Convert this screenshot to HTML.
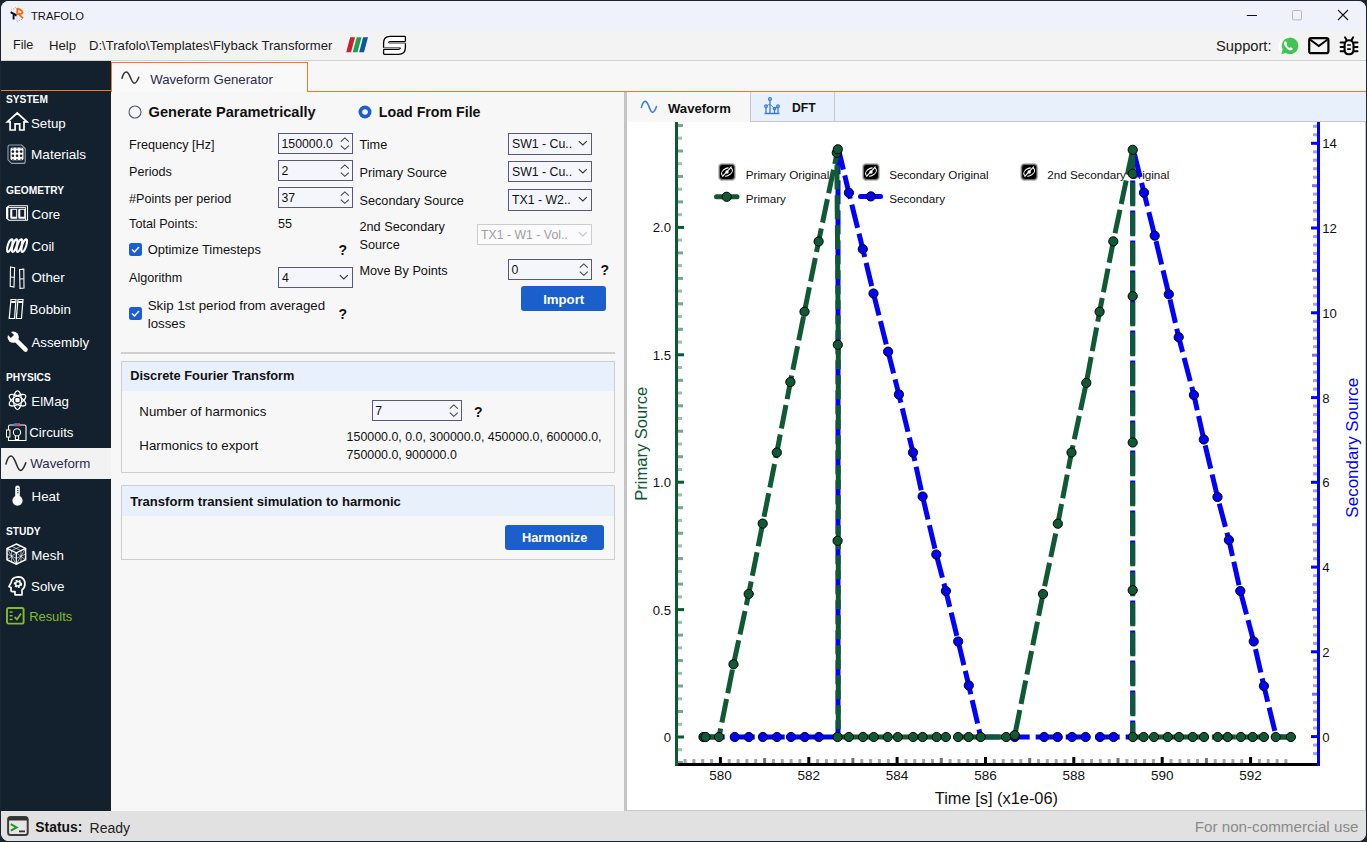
<!DOCTYPE html><html><head><meta charset='utf-8'><style>
*{box-sizing:border-box}
html,body{margin:0;padding:0;width:1367px;height:842px;overflow:hidden;background:#1b2431;font-family:"Liberation Sans",sans-serif;}
.a{position:absolute;white-space:nowrap}
.t{position:absolute;white-space:nowrap;line-height:1}
#win{position:absolute;left:1px;top:1px;width:1365px;height:840px;border-radius:8px;overflow:hidden;background:#f7f7f7}
svg{position:absolute;overflow:visible}
</style></head><body><div id="win"><div style="position:absolute;left:-1px;top:-1px;width:1367px;height:842px"><div class="a" style="left:0px;top:0px;width:1367px;height:31px;background:#eff2fa"></div>
<div class="a" style="left:0px;top:31px;width:1367px;height:30px;background:#f3f3f3"></div>
<div class="a" style="left:0px;top:60px;width:1367px;height:1px;background:#d2d2d2"></div>
<div class="a" style="left:0px;top:61px;width:1367px;height:30px;background:#f7f7f7"></div>
<div class="a" style="left:0px;top:61px;width:111px;height:750px;background:#13212f"></div>
<div class="a" style="left:0px;top:90px;width:111px;height:1px;background:#f47a20"></div>
<div class="a" style="left:307px;top:91px;width:1060px;height:1px;background:#f47a20"></div>
<div class="a" style="left:111px;top:62px;width:197px;height:30px;background:#f9f9f9;border:1px solid #f47a20;border-bottom:none"></div>
<div class="a" style="left:111px;top:92px;width:513px;height:719px;background:#f7f7f7"></div>
<div class="a" style="left:624px;top:92px;width:3px;height:719px;background:#c4c4c4"></div>
<div class="a" style="left:627px;top:92px;width:740px;height:30px;background:#e8f0fc;border-bottom:1px solid #c8c8c8"></div>
<div class="a" style="left:627px;top:92px;width:123px;height:30px;background:#f7f7f7"></div>
<div class="a" style="left:750px;top:92px;width:85px;height:30px;border-left:1px solid #c8c8c8;border-right:1px solid #c8c8c8;border-bottom:1px solid #c8c8c8"></div>
<div class="a" style="left:627px;top:122px;width:739px;height:689px;background:#ffffff;border-bottom:1px solid #c8c8c8;border-right:1px solid #c8c8c8"></div>
<div class="a" style="left:0px;top:811px;width:1367px;height:31px;background:#e1e1e1"></div>
<svg style="left:5px;top:3px;" width="25" height="25" viewBox="0 0 25 25"><path d="M5.9 7.1 L11.3 4.2" stroke="#f7a770" stroke-width="1" stroke-dasharray="1.3 0.9" fill="none"/><path d="M11.9 18.4 L17.8 16" stroke="#9aa3ad" stroke-width="1" stroke-dasharray="1.3 0.9" fill="none"/><path d="M11.9 12.2 V18" stroke="#d5dbe2" stroke-width="1" fill="none"/><path d="M5.6 9.2 L11.6 12.5" stroke="#0b1220" stroke-width="2" fill="none"/><path d="M8.6 11.6 V16.6" stroke="#0b1220" stroke-width="1.9" fill="none"/><path d="M12.3 5 V11.9 M12.3 5.4 L16.2 7.4 Q17.6 8.3 17.4 9.6 Q17.2 10.8 15.8 10.9 L13.6 10.6 L17.9 15.4" stroke="#ff6a10" stroke-width="1.9" fill="none" stroke-linejoin="miter"/></svg>
<div class="t" style="left:31px;top:10.52px;font-size:11.2px;font-weight:normal;color:#111;">TRAFOLO</div>
<svg style="left:1246px;top:14px;" width="12" height="3" viewBox="0 0 12 3"><path d="M0.8 1.5 H11" stroke="#111" stroke-width="1.1"/></svg><svg style="left:1291px;top:9px;" width="12" height="12" viewBox="0 0 12 12"><rect x="1.5" y="1.5" width="9" height="9.4" rx="1" stroke="#b8b8b8" stroke-width="1" fill="none"/></svg><svg style="left:1337px;top:9px;" width="12" height="12" viewBox="0 0 12 12"><path d="M1 1 L11 11 M11 1 L1 11" stroke="#111" stroke-width="1.1"/></svg>
<div class="t" style="left:13px;top:39.33px;font-size:12.6px;font-weight:normal;color:#1a1a1a;">File</div>
<div class="t" style="left:49px;top:38.83px;font-size:13.2px;font-weight:normal;color:#1a1a1a;">Help</div>
<div class="t" style="left:89px;top:38.91px;font-size:13.1px;font-weight:normal;color:#1a1a1a;">D:\Trafolo\Templates\Flyback Transformer</div>
<svg style="left:346px;top:37px;" width="23" height="16" viewBox="0 0 23 16"><path d="M4.2 0.3 H9 L5 15.2 H0.2 Z" fill="#c9212b"/><path d="M10.7 0.3 H15.5 L11.5 15.2 H6.7 Z" fill="#23a047"/><path d="M17.1 0.3 H22 L18 15.2 H13.2 Z" fill="#0b56a1"/></svg><svg style="left:380px;top:33px;" width="30" height="25" viewBox="0 0 30 25"><path d="M3.6 14.9 V10 Q3.6 3.3 10 3.3 H25.4 V8.6 H10 L8.4 9.9 H25.4 V14.5 Q25.4 21.4 18.4 21.4 H3.6 V16.3 H18.4 L20.5 14.9 Z" fill="#fff"/><path d="M3.6 14.9 V10 Q3.6 3.3 10 3.3 H24.6 Q25.4 3.3 25.4 4.1 V7.8 Q25.4 8.6 24.6 8.6 H10 Q8.9 8.6 8.4 9.8" stroke="#000" stroke-width="1.3" fill="none"/><path d="M25.4 10.1 V14.5 Q25.4 21.4 18.4 21.4 H4.4 Q3.6 21.4 3.6 20.6 V17.1 Q3.6 16.3 4.4 16.3 H18.4 Q19.9 16.3 20.5 14.9" stroke="#000" stroke-width="1.3" fill="none"/><path d="M8.8 10.1 H25.4 M3.6 14.7 H20.5" stroke="#777" stroke-width="1.3" fill="none"/></svg>
<div class="t" style="left:1216px;top:38.56px;font-size:14.7px;font-weight:normal;color:#1a1a1a;">Support:</div>
<svg style="left:1278px;top:35.5px;" width="20" height="20" viewBox="0 0 20 20"><circle cx="10" cy="10" r="9.6" fill="#fff" opacity="0.9"/><path d="M3.3 18.2 L4.6 13.6 A8.3 8.3 0 1 1 7.6 16.9 Z" fill="#41c452"/><path d="M6.6 5.6 Q7.4 4.8 8.1 5.6 L9 7.4 Q9.1 8.1 8.4 8.6 Q9.3 10.9 11.5 12 Q12.1 11.2 12.8 11.3 L14.5 12.3 Q15.1 13 14.2 13.8 Q12.8 15 10 13.4 Q7.2 11.7 6.1 8.8 Q5.6 6.7 6.6 5.6 Z" fill="#fff"/></svg><svg style="left:1308px;top:37px;" width="22" height="18" viewBox="0 0 22 18"><rect x="1.2" y="1.2" width="19.2" height="15" rx="2" stroke="#000" stroke-width="2.2" fill="none"/><path d="M2 2.5 L10.8 9 L19.6 2.5" stroke="#000" stroke-width="2" fill="none"/></svg><svg style="left:1336px;top:33px;" width="26" height="26" viewBox="0 0 26 26"><path d="M8.6 12.2 Q8.6 7.2 13 7.2 Q17.5 7.2 17.5 12.2 V16.4 Q17.5 21.2 13 21.2 Q8.6 21.2 8.6 16.4 Z" stroke="#000" stroke-width="2.1" fill="none"/><path d="M9 4.3 L10.6 6.9 M17.2 4.3 L15.6 6.9" stroke="#000" stroke-width="2" stroke-linecap="round" fill="none"/><path d="M4.6 9.6 H7.8 M4.6 13.9 H7.8 M4.6 18.2 H7.8 M18.3 9.6 H21.5 M18.3 13.9 H21.5 M18.3 18.2 H21.5" stroke="#000" stroke-width="2" stroke-linecap="round" fill="none"/><path d="M11.2 12 H14.8 M11.2 16.1 H14.8" stroke="#000" stroke-width="1.7"/></svg>
<div class="t" style="left:6px;top:95.17px;font-size:10.2px;font-weight:bold;color:#ffffff;">SYSTEM</div>
<div class="t" style="left:31px;top:116.74px;font-size:13.3px;font-weight:normal;color:#ffffff;">Setup</div>
<div class="t" style="left:31px;top:148.49px;font-size:13.6px;font-weight:normal;color:#ffffff;">Materials</div>
<div class="t" style="left:6px;top:185.67px;font-size:10.2px;font-weight:bold;color:#ffffff;">GEOMETRY</div>
<div class="t" style="left:31.4px;top:207.74px;font-size:13.3px;font-weight:normal;color:#ffffff;">Core</div>
<div class="t" style="left:31.4px;top:239.74px;font-size:13.3px;font-weight:normal;color:#ffffff;">Coil</div>
<div class="t" style="left:31.4px;top:271.24px;font-size:13.3px;font-weight:normal;color:#ffffff;">Other</div>
<div class="t" style="left:29.4px;top:303.34px;font-size:13.3px;font-weight:normal;color:#ffffff;">Bobbin</div>
<div class="t" style="left:31.4px;top:335.74px;font-size:13.3px;font-weight:normal;color:#ffffff;">Assembly</div>
<div class="t" style="left:6px;top:373.17px;font-size:10.2px;font-weight:bold;color:#ffffff;">PHYSICS</div>
<div class="t" style="left:31.3px;top:394.74px;font-size:13.3px;font-weight:normal;color:#ffffff;">ElMag</div>
<div class="t" style="left:29.2px;top:426.34px;font-size:13.3px;font-weight:normal;color:#ffffff;">Circuits</div>
<div class="a" style="left:1px;top:448px;width:110px;height:31px;background:#f2f2f2"></div>
<div class="t" style="left:30.2px;top:457.44px;font-size:13.3px;font-weight:normal;color:#2b2b50;">Waveform</div>
<div class="t" style="left:31.6px;top:489.54px;font-size:13.3px;font-weight:normal;color:#ffffff;">Heat</div>
<div class="t" style="left:6px;top:526.87px;font-size:10.2px;font-weight:bold;color:#ffffff;">STUDY</div>
<div class="t" style="left:31.3px;top:548.64px;font-size:13.3px;font-weight:normal;color:#ffffff;">Mesh</div>
<div class="t" style="left:31.1px;top:580.44px;font-size:13.3px;font-weight:normal;color:#ffffff;">Solve</div>
<div class="t" style="left:29.2px;top:610.58px;font-size:12.9px;font-weight:normal;color:#86bb2a;">Results</div>
<svg style="left:7px;top:112px;" width="21" height="19" viewBox="0 0 21 19"><path d="M3.1 18 V9.8 H0.4 L10.2 1 L20 9.8 H17 V18 H12.7 V11.8 H8.1 V18 Z" stroke="#fff" stroke-width="1.7" fill="none" stroke-linejoin="miter"/></svg><svg style="left:7px;top:143.5px;" width="20" height="21" viewBox="0 0 20 21"><path d="M3 1 H14.6 L18.2 4.6 V17.4 Q18.2 19.4 16.2 19.4 H4.6 L1 15.8 V3 Q1 1 3 1 Z" stroke="#9aa2aa" stroke-width="1.1" fill="none"/><rect x="3.5" y="3.4" width="13" height="12.8" rx="1.6" fill="#fff"/><circle cx="5.9" cy="7.6" r="1.3" fill="#13212f"/><circle cx="5.9" cy="11.8" r="1.3" fill="#13212f"/><circle cx="10.0" cy="7.6" r="1.3" fill="#13212f"/><circle cx="10.0" cy="11.8" r="1.3" fill="#13212f"/><circle cx="14.1" cy="7.6" r="1.3" fill="#13212f"/><circle cx="14.1" cy="11.8" r="1.3" fill="#13212f"/><path d="M5.1 4 H6.7 M5.1 15.4 H6.7" stroke="#13212f" stroke-width="0.9"/><path d="M9.2 4 H10.8 M9.2 15.4 H10.8" stroke="#13212f" stroke-width="0.9"/><path d="M13.3 4 H14.9 M13.3 15.4 H14.9" stroke="#13212f" stroke-width="0.9"/></svg><svg style="left:6px;top:205px;" width="23" height="17" viewBox="0 0 23 17"><path d="M1 2.5 L3 0.8 H21.5 V15.2 H3 L1 13.5 Z" stroke="#fff" stroke-width="1.1" fill="none"/><path d="M1 2.5 H19.5 V15.2 M1 2.5 V13.5" stroke="#fff" stroke-width="0.9" fill="none"/><path d="M1.2 2.6 V13.6" stroke="#fff" stroke-width="2.2"/><rect x="5" y="4.3" width="5.7" height="8.7" stroke="#fff" stroke-width="1" fill="none"/><rect x="13" y="4.3" width="5.7" height="8.7" stroke="#fff" stroke-width="1" fill="none"/><path d="M5.2 12.6 H10.6 M5.4 4.6 V12.8 M13.2 12.6 H18.6 M13.4 4.6 V12.8" stroke="#fff" stroke-width="1.8"/></svg><svg style="left:6px;top:237.5px;" width="23" height="16" viewBox="0 0 23 16"><ellipse cx="3.8" cy="7.6" rx="2.0" ry="6.6" transform="rotate(18 3.8 7.6)" stroke="#fff" stroke-width="2.1" fill="none"/><ellipse cx="8.6" cy="7.6" rx="2.0" ry="6.6" transform="rotate(18 8.6 7.6)" stroke="#fff" stroke-width="2.1" fill="none"/><ellipse cx="13.4" cy="7.6" rx="2.0" ry="6.6" transform="rotate(18 13.4 7.6)" stroke="#fff" stroke-width="2.1" fill="none"/><ellipse cx="18.2" cy="7.6" rx="2.0" ry="6.6" transform="rotate(18 18.2 7.6)" stroke="#fff" stroke-width="2.1" fill="none"/></svg><svg style="left:8.5px;top:265.5px;" width="17" height="24" viewBox="0 0 17 24"><path d="M1.5 1 L5.6 1.8 L5 21 L1.2 20.2 Z" stroke="#fff" stroke-width="1.1" fill="none"/><path d="M2 11 L5.2 11.4" stroke="#fff" stroke-width="1"/><path d="M10.6 3.5 L14.8 3.2 L15 22 L11 22.4 Z" stroke="#fff" stroke-width="1.1" fill="none"/><path d="M11 13 L14.6 12.8" stroke="#fff" stroke-width="1"/></svg><svg style="left:7.5px;top:298px;" width="17" height="22" viewBox="0 0 17 22"><path d="M3 1.5 H8 L6.5 20.5 H1.2 Z" stroke="#fff" stroke-width="1.2" fill="none"/><path d="M10 1.5 H15 L13.5 20.5 H8.3 Z" stroke="#fff" stroke-width="1.2" fill="none"/><path d="M3.2 4 H7.6 M10.2 4 H14.6" stroke="#fff" stroke-width="2"/></svg><svg style="left:6.5px;top:331.2px;" width="21.5" height="21.5" viewBox="0 0 21.5 21.5"><circle cx="6.2" cy="6.2" r="5.6" fill="#fff"/><path d="M6.2 6.2 L18.6 18.6" stroke="#fff" stroke-width="4.4" stroke-linecap="round"/><path d="M-0.5 2.6 L2.6 -0.5 L7 3.9 L3.9 7 Z" fill="#13212f"/></svg><svg style="left:7.5px;top:389.8px;" width="19" height="21" viewBox="0 0 19 21"><ellipse cx="9.5" cy="10.2" rx="3.9" ry="9.4" stroke="#fff" stroke-width="1.3" fill="none"/><ellipse cx="9.5" cy="10.2" rx="3.9" ry="9.4" stroke="#fff" stroke-width="1.3" fill="none" transform="rotate(60 9.5 10.2)"/><ellipse cx="9.5" cy="10.2" rx="3.9" ry="9.4" stroke="#fff" stroke-width="1.3" fill="none" transform="rotate(-60 9.5 10.2)"/><circle cx="9.5" cy="10.2" r="3.4" fill="#13212f"/><rect x="7.4" y="8.1" width="4.2" height="4.2" rx="1.2" fill="#fff"/></svg><svg style="left:6.5px;top:421.5px;" width="20" height="21" viewBox="0 0 20 21"><path d="M3 3 H17.5 Q19 3 19 4.5 V18.5 H1.5 V4.5 Q1.5 3 3 3" stroke="#fff" stroke-width="1.1" fill="none"/><rect x="-0.5" y="8" width="3.4" height="7" stroke="#fff" stroke-width="1" fill="#13212f"/><circle cx="10" cy="10.4" r="3.6" stroke="#fff" stroke-width="1.1" fill="none"/><path d="M8.4 14 V17.5 H11.6 V14" stroke="#fff" stroke-width="1.1" fill="none"/><rect x="7" y="1.2" width="3" height="3" fill="#4a78d8"/><rect x="10" y="1.2" width="3" height="3" fill="#e04a5a"/></svg><svg style="left:5.1px;top:454.6px;" width="21.8" height="16.4" viewBox="0 0 21.8 16.4"><path d="M1.00 8.92 C2.58 2.44 4.37 1.00 6.07 1.00 C8.33 1.00 9.51 4.60 11.14 8.49 C12.68 12.23 13.67 15.40 15.49 15.40 C17.83 15.40 19.61 11.08 20.80 7.77" stroke="#2e2e2e" stroke-width="1.6" fill="none" stroke-linecap="round"/></svg><svg style="left:11.5px;top:484.8px;" width="11" height="21" viewBox="0 0 11 21"><rect x="3.2" y="0.4" width="4.6" height="15" rx="2.3" fill="#fff"/><circle cx="5.5" cy="15.6" r="5.1" fill="#fff"/><path d="M5 3.4 H6.6 M5 5.6 H6.6 M5 7.8 H6.6" stroke="#13212f" stroke-width="0.9"/></svg><svg style="left:6.2px;top:543px;" width="21" height="23" viewBox="0 0 21 23"><path d="M10.3 1 L19.6 5.4 V16.8 L10.3 21.2 L1 16.8 V5.4 Z" stroke="#fff" stroke-width="1.5" fill="none"/><path d="M1 5.4 L10.3 9.8 L19.6 5.4 M10.3 9.8 V21.2" stroke="#fff" stroke-width="1.2" fill="none"/><path d="M5.6 3.2 L15 7.6 M15 3.2 L5.6 7.6 M1 11 L10.3 15.4 M10.3 15.4 L19.6 11 M5.6 7.6 V19 M15 7.6 V19 M1 5.4 L10.3 21.2 M19.6 5.4 L10.3 21.2 M1 16.8 L10.3 9.8 M19.6 16.8 L10.3 9.8" stroke="#fff" stroke-width="0.6" fill="none"/></svg><svg style="left:8px;top:576.2px;" width="19" height="20" viewBox="0 0 19 20"><path d="M7 18.8 V15.6 H4.4 Q3 15.6 3 14.2 V11.6 L0.9 10.6 L3.2 6.4 Q4 1 10.6 0.9 Q16.9 1.2 16.9 8 Q16.9 11.8 14 14 V18.8 Z" stroke="#fff" stroke-width="1.7" fill="none" stroke-linejoin="round"/><circle cx="10" cy="7.8" r="2.9" stroke="#fff" stroke-width="2.6" fill="none" stroke-dasharray="1.7 1.1"/><circle cx="10" cy="7.8" r="2.4" stroke="#fff" stroke-width="1.3" fill="none"/></svg><svg style="left:5.6px;top:607.2px;" width="19" height="18" viewBox="0 0 19 18"><rect x="1" y="1" width="16.6" height="15.6" rx="1.6" stroke="#86bb2a" stroke-width="1.9" fill="none"/><path d="M3.6 5 H6.6 M3.6 8.8 H6.6 M3.6 12.6 H6.6" stroke="#86bb2a" stroke-width="1.5"/><path d="M8.6 10 L11 12.4 L15 6.6" stroke="#86bb2a" stroke-width="1.8" fill="none"/></svg>
<svg style="left:120.7px;top:71.1px;" width="18.8" height="13.3" viewBox="0 0 18.8 13.3"><path d="M1.00 7.22 C2.34 2.13 3.86 1.00 5.30 1.00 C7.22 1.00 8.22 3.83 9.60 6.88 C10.91 9.81 11.75 12.30 13.30 12.30 C15.28 12.30 16.79 8.91 17.80 6.31" stroke="#333" stroke-width="1.5" fill="none" stroke-linecap="round"/></svg>
<div class="t" style="left:150.2px;top:72.83px;font-size:13.2px;font-weight:normal;color:#2b2b50;">Waveform Generator</div>
<svg style="left:128px;top:104.5px" width="14" height="14" viewBox="0 0 14 14"><circle cx="7" cy="7" r="6" fill="#f5f6fc" stroke="#56566e" stroke-width="1.1"/></svg>
<div class="t" style="left:148.6px;top:104.94px;font-size:14.6px;font-weight:bold;color:#111;">Generate Parametrically</div>
<svg style="left:358px;top:104.5px" width="14" height="14" viewBox="0 0 14 14"><circle cx="7" cy="7" r="6.5" fill="#1a5fcc"/><circle cx="7" cy="7" r="2.8" fill="#fff"/></svg>
<div class="t" style="left:378.8px;top:105.28px;font-size:14.2px;font-weight:bold;color:#111;">Load From File</div>
<div class="t" style="left:129.1px;top:138.63px;font-size:12.6px;font-weight:normal;color:#111;">Frequency [Hz]</div>
<div class="a" style="left:278px;top:133px;width:75px;height:21px;background:#f5f6fc;border:1px solid #58587a"></div>
<div class="t" style="left:281.5px;top:138.09px;font-size:12.3px;font-weight:normal;color:#111;">150000.0</div>
<svg style="left:340px;top:137px" width="10" height="14" viewBox="0 0 10 14"><path d="M0.8 4.6 L4.8 0.9 L8.8 4.6 M0.8 8.6 L4.8 12.3 L8.8 8.6" stroke="#444" stroke-width="1.1" fill="none"/></svg>
<div class="t" style="left:129.1px;top:165.63px;font-size:12.6px;font-weight:normal;color:#111;">Periods</div>
<div class="a" style="left:278px;top:160px;width:75px;height:21px;background:#f5f6fc;border:1px solid #58587a"></div>
<div class="t" style="left:281.5px;top:165.09px;font-size:12.3px;font-weight:normal;color:#111;">2</div>
<svg style="left:340px;top:164px" width="10" height="14" viewBox="0 0 10 14"><path d="M0.8 4.6 L4.8 0.9 L8.8 4.6 M0.8 8.6 L4.8 12.3 L8.8 8.6" stroke="#444" stroke-width="1.1" fill="none"/></svg>
<div class="t" style="left:129.1px;top:193.33px;font-size:12.6px;font-weight:normal;color:#111;">#Points per period</div>
<div class="a" style="left:278px;top:187px;width:75px;height:21px;background:#f5f6fc;border:1px solid #58587a"></div>
<div class="t" style="left:281.5px;top:192.09px;font-size:12.3px;font-weight:normal;color:#111;">37</div>
<svg style="left:340px;top:191px" width="10" height="14" viewBox="0 0 10 14"><path d="M0.8 4.6 L4.8 0.9 L8.8 4.6 M0.8 8.6 L4.8 12.3 L8.8 8.6" stroke="#444" stroke-width="1.1" fill="none"/></svg>
<div class="t" style="left:129.1px;top:218.33px;font-size:12.6px;font-weight:normal;color:#111;">Total Points:</div>
<div class="t" style="left:278px;top:218.33px;font-size:12.6px;font-weight:normal;color:#111;">55</div>
<svg style="left:129px;top:243px" width="13" height="13" viewBox="0 0 13 13"><rect x="0" y="0" width="13" height="13" rx="2.5" fill="#1a5fcc"/><path d="M3 6.6 L5.4 9 L10 4" stroke="#fff" stroke-width="1.4" fill="none"/></svg>
<div class="t" style="left:147.7px;top:243.88px;font-size:12.9px;font-weight:normal;color:#111;">Optimize Timesteps</div>
<div class="t" style="left:338.5px;top:242.65px;font-size:14px;font-weight:bold;color:#111;">?</div>
<div class="t" style="left:129.1px;top:271.83px;font-size:12.6px;font-weight:normal;color:#111;">Algorithm</div>
<div class="a" style="left:278px;top:266.5px;width:75px;height:21px;background:#f5f6fc;border:1px solid #58587a"></div>
<div class="t" style="left:282px;top:271.59px;font-size:12.3px;font-weight:normal;color:#111;">4</div>
<svg style="left:339px;top:273.5px" width="10" height="7" viewBox="0 0 10 7"><path d="M0.8 1.2 L4.8 5 L8.8 1.2" stroke="#333" stroke-width="1.1" fill="none"/></svg>
<svg style="left:129px;top:307px" width="13" height="13" viewBox="0 0 13 13"><rect x="0" y="0" width="13" height="13" rx="2.5" fill="#1a5fcc"/><path d="M3 6.6 L5.4 9 L10 4" stroke="#fff" stroke-width="1.4" fill="none"/></svg>
<div class="t" style="left:147.7px;top:298.84px;font-size:13.3px;font-weight:normal;color:#111;">Skip 1st period from averaged</div>
<div class="t" style="left:147.7px;top:316.74px;font-size:13.3px;font-weight:normal;color:#111;">losses</div>
<div class="t" style="left:338.5px;top:307.15px;font-size:14px;font-weight:bold;color:#111;">?</div>
<div class="t" style="left:359.5px;top:139.05px;font-size:12.7px;font-weight:normal;color:#111;">Time</div>
<div class="a" style="left:508px;top:133.2px;width:83.5px;height:21.5px;background:#f5f6fc;border:1px solid #58587a"></div>
<div class="t" style="left:512px;top:138.29px;font-size:12.3px;font-weight:normal;color:#111;">SW1 - Cu..</div>
<svg style="left:577.5px;top:140.2px" width="10" height="7" viewBox="0 0 10 7"><path d="M0.8 1.2 L4.8 5 L8.8 1.2" stroke="#333" stroke-width="1.1" fill="none"/></svg>
<div class="t" style="left:359.5px;top:167.25px;font-size:12.7px;font-weight:normal;color:#111;">Primary Source</div>
<div class="a" style="left:508px;top:160.9px;width:83.5px;height:21.5px;background:#f5f6fc;border:1px solid #58587a"></div>
<div class="t" style="left:512px;top:165.99px;font-size:12.3px;font-weight:normal;color:#111;">SW1 - Cu..</div>
<svg style="left:577.5px;top:167.9px" width="10" height="7" viewBox="0 0 10 7"><path d="M0.8 1.2 L4.8 5 L8.8 1.2" stroke="#333" stroke-width="1.1" fill="none"/></svg>
<div class="t" style="left:359.5px;top:195.45px;font-size:12.7px;font-weight:normal;color:#111;">Secondary Source</div>
<div class="a" style="left:508px;top:189.1px;width:83.5px;height:21.5px;background:#f5f6fc;border:1px solid #58587a"></div>
<div class="t" style="left:512px;top:194.19px;font-size:12.3px;font-weight:normal;color:#111;">TX1 - W2..</div>
<svg style="left:577.5px;top:196.1px" width="10" height="7" viewBox="0 0 10 7"><path d="M0.8 1.2 L4.8 5 L8.8 1.2" stroke="#333" stroke-width="1.1" fill="none"/></svg>
<div class="t" style="left:359.5px;top:221.25px;font-size:12.7px;font-weight:normal;color:#111;">2nd Secondary</div>
<div class="t" style="left:359.5px;top:239.05px;font-size:12.7px;font-weight:normal;color:#111;">Source</div>
<div class="a" style="left:477px;top:224.4px;width:114.5px;height:21px;background:#fbfbfc;border:1px solid #cbcbd3"></div>
<div class="t" style="left:481px;top:229.49px;font-size:12.3px;font-weight:normal;color:#a0a0a0;">TX1 - W1 - Vol..</div>
<svg style="left:577.5px;top:231.4px" width="10" height="7" viewBox="0 0 10 7"><path d="M0.8 1.2 L4.8 5 L8.8 1.2" stroke="#c4c4c4" stroke-width="1.1" fill="none"/></svg>
<div class="t" style="left:359.5px;top:264.65px;font-size:12.7px;font-weight:normal;color:#111;">Move By Points</div>
<div class="a" style="left:508px;top:259.2px;width:83.5px;height:20.5px;background:#f5f6fc;border:1px solid #58587a"></div>
<div class="t" style="left:511.5px;top:264.29px;font-size:12.3px;font-weight:normal;color:#111;">0</div>
<svg style="left:578.5px;top:263.2px" width="10" height="14" viewBox="0 0 10 14"><path d="M0.8 4.6 L4.8 0.9 L8.8 4.6 M0.8 8.6 L4.8 12.3 L8.8 8.6" stroke="#444" stroke-width="1.1" fill="none"/></svg>
<div class="t" style="left:600.5px;top:263.15px;font-size:14px;font-weight:bold;color:#111;">?</div>
<div class="a" style="left:521.3px;top:286px;width:84.7px;height:24.6px;background:#1a5fcc;border-radius:3px"></div>
<div class="t" style="left:521.3px;top:292.68px;width:84.7px;text-align:center;font-size:13.2px;font-weight:bold;color:#fff">Import</div>
<div class="a" style="left:120.6px;top:352px;width:494px;height:2px;background:#d0d0d0"></div>
<div class="a" style="left:120.6px;top:361px;width:494px;height:111.5px;border:1px solid #cdcdcd;background:#f7f7f7"></div>
<div class="a" style="left:121.6px;top:362px;width:492px;height:29px;background:#e8f0fc"></div>
<div class="t" style="left:130.2px;top:369.86px;font-size:12.8px;font-weight:bold;color:#111;">Discrete Fourier Transform</div>
<div class="t" style="left:139.3px;top:404.84px;font-size:13.3px;font-weight:normal;color:#111;">Number of harmonics</div>
<div class="a" style="left:371.7px;top:400.1px;width:90.1px;height:21px;background:#f5f6fc;border:1px solid #58587a"></div>
<div class="t" style="left:375.2px;top:405.19px;font-size:12.3px;font-weight:normal;color:#111;">7</div>
<svg style="left:448.79999999999995px;top:404.1px" width="10" height="14" viewBox="0 0 10 14"><path d="M0.8 4.6 L4.8 0.9 L8.8 4.6 M0.8 8.6 L4.8 12.3 L8.8 8.6" stroke="#444" stroke-width="1.1" fill="none"/></svg>
<div class="t" style="left:474px;top:405.15px;font-size:14px;font-weight:bold;color:#111;">?</div>
<div class="t" style="left:139.3px;top:439.24px;font-size:13.3px;font-weight:normal;color:#111;">Harmonics to export</div>
<div class="t" style="left:346.6px;top:431.10px;font-size:12.4px;font-weight:normal;color:#111;">150000.0, 0.0, 300000.0, 450000.0, 600000.0,</div>
<div class="t" style="left:346.6px;top:449.10px;font-size:12.4px;font-weight:normal;color:#111;">750000.0, 900000.0</div>
<div class="a" style="left:120.6px;top:485.3px;width:494px;height:74.6px;border:1px solid #cdcdcd;background:#f7f7f7"></div>
<div class="a" style="left:121.6px;top:486.3px;width:492px;height:29.4px;background:#e8f0fc"></div>
<div class="t" style="left:130.2px;top:495.11px;font-size:13.1px;font-weight:bold;color:#111;">Transform transient simulation to harmonic</div>
<div class="a" style="left:504.8px;top:525.2px;width:99.7px;height:24.8px;background:#1a5fcc;border-radius:3px"></div>
<div class="t" style="left:504.8px;top:532.17px;width:99.7px;text-align:center;font-size:12.8px;font-weight:bold;color:#fff">Harmonize</div>
<svg style="left:7px;top:816px;" width="22" height="21" viewBox="0 0 22 21"><rect x="1.1" y="1.1" width="19.6" height="18" rx="2.6" fill="#e6e6e6" stroke="#3c3c3c" stroke-width="2"/><path d="M1 4.6 V3.6 Q1 1 3.6 1 H18.2 Q20.8 1 20.8 3.6 V4.6 Z" fill="#333"/><path d="M3.8 8.2 L9.6 11.4 L3.8 14.6" stroke="#1b9a1b" stroke-width="2" fill="none"/><path d="M12 15.4 H18" stroke="#333" stroke-width="1.8"/></svg>
<div class="t" style="left:35.3px;top:821.23px;font-size:13.9px;font-weight:bold;color:#111;">Status:</div>
<div class="t" style="left:89.6px;top:821.15px;font-size:14px;font-weight:normal;color:#222;">Ready</div>
<div class="t" style="left:1194.7px;top:819.13px;font-size:15.2px;font-weight:normal;color:#8a8a8a;">For non-commercial use</div>
<svg style="left:0;top:0" width="1367" height="842" viewBox="0 0 1367 842" font-family="Liberation Sans, sans-serif">
<svg x="640.4" y="100.4" style="left:640.4px;top:100.4px;" width="17.1" height="12.9" viewBox="0 0 17.1 12.9"><path d="M1.00 7.00 C2.21 2.09 3.57 1.00 4.87 1.00 C6.59 1.00 7.49 3.73 8.73 6.67 C9.91 9.50 10.66 11.90 12.05 11.90 C13.83 11.90 15.19 8.63 16.10 6.12" stroke="#3b7ddd" stroke-width="1.6" fill="none" stroke-linecap="round"/></svg>
<text x="668.0" y="112.8" font-size="13.1" fill="#111" text-anchor="start" font-weight="bold">Waveform</text>
<g stroke="#3a7bd5" stroke-width="1.3" fill="none"><path d="M764.5 113.5 H779.5 M766 113.5 V107 M770 113.5 V99.5 M774.5 113.5 V109.5 M778 113.5 V107"/><circle cx="770" cy="99" r="1.4"/><circle cx="766" cy="106.2" r="1.3"/><circle cx="774.5" cy="108.6" r="1.3"/><circle cx="778" cy="106.2" r="1.3"/><path d="M766 106.2 L770 104 L774.5 108.6 L778 106.2" stroke-width="0.8"/></g>
<text x="791.9" y="111.7" font-size="12.2" fill="#111" text-anchor="start" font-weight="bold">DFT</text>
<g transform="translate(720,165)"><rect x="-2" y="-2" width="18" height="18" rx="4.4" fill="#c4c4c4"/><rect x="-1" y="-1" width="16" height="16" rx="3.4" fill="#707070"/><rect x="0" y="0" width="14" height="14" rx="2.4" fill="#000"/><ellipse cx="7" cy="7" rx="5.8" ry="3.6" transform="rotate(-28 7 7)" stroke="#fff" stroke-width="1.1" fill="none" stroke-dasharray="11 2.2 12 2.2"/><circle cx="7" cy="7" r="1.7" fill="#fff"/><path d="M2.3 11.7 L11.6 1.7" stroke="#fff" stroke-width="1.2"/></g>
<text x="745.7" y="179.0" font-size="11.7" fill="#111" text-anchor="start" >Primary Original</text>
<g transform="translate(864,165)"><rect x="-2" y="-2" width="18" height="18" rx="4.4" fill="#c4c4c4"/><rect x="-1" y="-1" width="16" height="16" rx="3.4" fill="#707070"/><rect x="0" y="0" width="14" height="14" rx="2.4" fill="#000"/><ellipse cx="7" cy="7" rx="5.8" ry="3.6" transform="rotate(-28 7 7)" stroke="#fff" stroke-width="1.1" fill="none" stroke-dasharray="11 2.2 12 2.2"/><circle cx="7" cy="7" r="1.7" fill="#fff"/><path d="M2.3 11.7 L11.6 1.7" stroke="#fff" stroke-width="1.2"/></g>
<text x="889.2" y="179.0" font-size="11.7" fill="#111" text-anchor="start" >Secondary Original</text>
<g transform="translate(1022.2,165)"><rect x="-2" y="-2" width="18" height="18" rx="4.4" fill="#c4c4c4"/><rect x="-1" y="-1" width="16" height="16" rx="3.4" fill="#707070"/><rect x="0" y="0" width="14" height="14" rx="2.4" fill="#000"/><ellipse cx="7" cy="7" rx="5.8" ry="3.6" transform="rotate(-28 7 7)" stroke="#fff" stroke-width="1.1" fill="none" stroke-dasharray="11 2.2 12 2.2"/><circle cx="7" cy="7" r="1.7" fill="#fff"/><path d="M2.3 11.7 L11.6 1.7" stroke="#fff" stroke-width="1.2"/></g>
<text x="1047.3" y="178.6" font-size="11.7" fill="#111" text-anchor="start" >2nd Secondary Original</text>
<path d="M716.5 196.8 H737" stroke="#0f5a35" stroke-width="5" stroke-linecap="round"/>
<circle cx="726.7" cy="196.8" r="4.6" fill="#0f5a35" stroke="#000" stroke-width="1"/>
<text x="745.7" y="203.0" font-size="11.7" fill="#111" text-anchor="start" >Primary</text>
<path d="M860.5 196.4 H880.5" stroke="#0000ff" stroke-width="5" stroke-linecap="round"/>
<circle cx="870.8" cy="196.4" r="4.6" fill="#0000ff" stroke="#000" stroke-width="1"/>
<text x="889.2" y="203.0" font-size="11.7" fill="#111" text-anchor="start" >Secondary</text>
<rect x="678" y="761.0" width="5" height="3" fill="#0b5a32" opacity="0.55"/>
<rect x="678" y="748.2" width="4" height="3" fill="#0b5a32" opacity="0.4"/>
<rect x="678" y="735.5" width="6" height="3" fill="#0b5a32"/>
<rect x="678" y="722.8" width="4" height="3" fill="#0b5a32" opacity="0.4"/>
<rect x="678" y="710.0" width="5" height="3" fill="#0b5a32" opacity="0.55"/>
<rect x="678" y="697.3" width="4" height="3" fill="#0b5a32" opacity="0.4"/>
<rect x="678" y="684.5" width="5" height="3" fill="#0b5a32" opacity="0.55"/>
<rect x="678" y="671.8" width="4" height="3" fill="#0b5a32" opacity="0.4"/>
<rect x="678" y="659.1" width="5" height="3" fill="#0b5a32" opacity="0.55"/>
<rect x="678" y="646.3" width="4" height="3" fill="#0b5a32" opacity="0.4"/>
<rect x="678" y="633.6" width="5" height="3" fill="#0b5a32" opacity="0.55"/>
<rect x="678" y="620.8" width="4" height="3" fill="#0b5a32" opacity="0.4"/>
<rect x="678" y="608.1" width="6" height="3" fill="#0b5a32"/>
<rect x="678" y="595.4" width="4" height="3" fill="#0b5a32" opacity="0.4"/>
<rect x="678" y="582.6" width="5" height="3" fill="#0b5a32" opacity="0.55"/>
<rect x="678" y="569.9" width="4" height="3" fill="#0b5a32" opacity="0.4"/>
<rect x="678" y="557.1" width="5" height="3" fill="#0b5a32" opacity="0.55"/>
<rect x="678" y="544.4" width="4" height="3" fill="#0b5a32" opacity="0.4"/>
<rect x="678" y="531.7" width="5" height="3" fill="#0b5a32" opacity="0.55"/>
<rect x="678" y="518.9" width="4" height="3" fill="#0b5a32" opacity="0.4"/>
<rect x="678" y="506.2" width="5" height="3" fill="#0b5a32" opacity="0.55"/>
<rect x="678" y="493.4" width="4" height="3" fill="#0b5a32" opacity="0.4"/>
<rect x="678" y="480.7" width="6" height="3" fill="#0b5a32"/>
<rect x="678" y="468.0" width="4" height="3" fill="#0b5a32" opacity="0.4"/>
<rect x="678" y="455.2" width="5" height="3" fill="#0b5a32" opacity="0.55"/>
<rect x="678" y="442.5" width="4" height="3" fill="#0b5a32" opacity="0.4"/>
<rect x="678" y="429.7" width="5" height="3" fill="#0b5a32" opacity="0.55"/>
<rect x="678" y="417.0" width="4" height="3" fill="#0b5a32" opacity="0.4"/>
<rect x="678" y="404.3" width="5" height="3" fill="#0b5a32" opacity="0.55"/>
<rect x="678" y="391.5" width="4" height="3" fill="#0b5a32" opacity="0.4"/>
<rect x="678" y="378.8" width="5" height="3" fill="#0b5a32" opacity="0.55"/>
<rect x="678" y="366.0" width="4" height="3" fill="#0b5a32" opacity="0.4"/>
<rect x="678" y="353.3" width="6" height="3" fill="#0b5a32"/>
<rect x="678" y="340.6" width="4" height="3" fill="#0b5a32" opacity="0.4"/>
<rect x="678" y="327.8" width="5" height="3" fill="#0b5a32" opacity="0.55"/>
<rect x="678" y="315.1" width="4" height="3" fill="#0b5a32" opacity="0.4"/>
<rect x="678" y="302.3" width="5" height="3" fill="#0b5a32" opacity="0.55"/>
<rect x="678" y="289.6" width="4" height="3" fill="#0b5a32" opacity="0.4"/>
<rect x="678" y="276.9" width="5" height="3" fill="#0b5a32" opacity="0.55"/>
<rect x="678" y="264.1" width="4" height="3" fill="#0b5a32" opacity="0.4"/>
<rect x="678" y="251.4" width="5" height="3" fill="#0b5a32" opacity="0.55"/>
<rect x="678" y="238.6" width="4" height="3" fill="#0b5a32" opacity="0.4"/>
<rect x="678" y="225.9" width="6" height="3" fill="#0b5a32"/>
<rect x="678" y="213.2" width="4" height="3" fill="#0b5a32" opacity="0.4"/>
<rect x="678" y="200.4" width="5" height="3" fill="#0b5a32" opacity="0.55"/>
<rect x="678" y="187.7" width="4" height="3" fill="#0b5a32" opacity="0.4"/>
<rect x="678" y="174.9" width="5" height="3" fill="#0b5a32" opacity="0.55"/>
<rect x="678" y="162.2" width="4" height="3" fill="#0b5a32" opacity="0.4"/>
<rect x="678" y="149.5" width="5" height="3" fill="#0b5a32" opacity="0.55"/>
<rect x="678" y="136.7" width="4" height="3" fill="#0b5a32" opacity="0.4"/>
<rect x="678" y="124.0" width="5" height="3" fill="#0b5a32" opacity="0.55"/>
<rect x="683.6" y="759" width="3" height="4" fill="#000" opacity="0.35"/>
<rect x="692.4" y="759" width="3" height="4" fill="#000" opacity="0.35"/>
<rect x="701.2" y="759" width="3" height="4" fill="#000" opacity="0.35"/>
<rect x="710.1" y="759" width="3" height="4" fill="#000" opacity="0.35"/>
<rect x="718.9" y="757" width="3" height="6" fill="#000"/>
<rect x="727.7" y="759" width="3" height="4" fill="#000" opacity="0.35"/>
<rect x="736.6" y="759" width="3" height="4" fill="#000" opacity="0.35"/>
<rect x="745.4" y="759" width="3" height="4" fill="#000" opacity="0.35"/>
<rect x="754.2" y="759" width="3" height="4" fill="#000" opacity="0.35"/>
<rect x="763.1" y="758" width="3" height="5" fill="#000" opacity="0.55"/>
<rect x="771.9" y="759" width="3" height="4" fill="#000" opacity="0.35"/>
<rect x="780.8" y="759" width="3" height="4" fill="#000" opacity="0.35"/>
<rect x="789.6" y="759" width="3" height="4" fill="#000" opacity="0.35"/>
<rect x="798.4" y="759" width="3" height="4" fill="#000" opacity="0.35"/>
<rect x="807.3" y="757" width="3" height="6" fill="#000"/>
<rect x="816.1" y="759" width="3" height="4" fill="#000" opacity="0.35"/>
<rect x="824.9" y="759" width="3" height="4" fill="#000" opacity="0.35"/>
<rect x="833.8" y="759" width="3" height="4" fill="#000" opacity="0.35"/>
<rect x="842.6" y="759" width="3" height="4" fill="#000" opacity="0.35"/>
<rect x="851.4" y="758" width="3" height="5" fill="#000" opacity="0.55"/>
<rect x="860.3" y="759" width="3" height="4" fill="#000" opacity="0.35"/>
<rect x="869.1" y="759" width="3" height="4" fill="#000" opacity="0.35"/>
<rect x="877.9" y="759" width="3" height="4" fill="#000" opacity="0.35"/>
<rect x="886.8" y="759" width="3" height="4" fill="#000" opacity="0.35"/>
<rect x="895.6" y="757" width="3" height="6" fill="#000"/>
<rect x="904.5" y="759" width="3" height="4" fill="#000" opacity="0.35"/>
<rect x="913.3" y="759" width="3" height="4" fill="#000" opacity="0.35"/>
<rect x="922.1" y="759" width="3" height="4" fill="#000" opacity="0.35"/>
<rect x="931.0" y="759" width="3" height="4" fill="#000" opacity="0.35"/>
<rect x="939.8" y="758" width="3" height="5" fill="#000" opacity="0.55"/>
<rect x="948.6" y="759" width="3" height="4" fill="#000" opacity="0.35"/>
<rect x="957.5" y="759" width="3" height="4" fill="#000" opacity="0.35"/>
<rect x="966.3" y="759" width="3" height="4" fill="#000" opacity="0.35"/>
<rect x="975.1" y="759" width="3" height="4" fill="#000" opacity="0.35"/>
<rect x="984.0" y="757" width="3" height="6" fill="#000"/>
<rect x="992.8" y="759" width="3" height="4" fill="#000" opacity="0.35"/>
<rect x="1001.7" y="759" width="3" height="4" fill="#000" opacity="0.35"/>
<rect x="1010.5" y="759" width="3" height="4" fill="#000" opacity="0.35"/>
<rect x="1019.3" y="759" width="3" height="4" fill="#000" opacity="0.35"/>
<rect x="1028.2" y="758" width="3" height="5" fill="#000" opacity="0.55"/>
<rect x="1037.0" y="759" width="3" height="4" fill="#000" opacity="0.35"/>
<rect x="1045.8" y="759" width="3" height="4" fill="#000" opacity="0.35"/>
<rect x="1054.7" y="759" width="3" height="4" fill="#000" opacity="0.35"/>
<rect x="1063.5" y="759" width="3" height="4" fill="#000" opacity="0.35"/>
<rect x="1072.3" y="757" width="3" height="6" fill="#000"/>
<rect x="1081.2" y="759" width="3" height="4" fill="#000" opacity="0.35"/>
<rect x="1090.0" y="759" width="3" height="4" fill="#000" opacity="0.35"/>
<rect x="1098.8" y="759" width="3" height="4" fill="#000" opacity="0.35"/>
<rect x="1107.7" y="759" width="3" height="4" fill="#000" opacity="0.35"/>
<rect x="1116.5" y="758" width="3" height="5" fill="#000" opacity="0.55"/>
<rect x="1125.4" y="759" width="3" height="4" fill="#000" opacity="0.35"/>
<rect x="1134.2" y="759" width="3" height="4" fill="#000" opacity="0.35"/>
<rect x="1143.0" y="759" width="3" height="4" fill="#000" opacity="0.35"/>
<rect x="1151.9" y="759" width="3" height="4" fill="#000" opacity="0.35"/>
<rect x="1160.7" y="757" width="3" height="6" fill="#000"/>
<rect x="1169.5" y="759" width="3" height="4" fill="#000" opacity="0.35"/>
<rect x="1178.4" y="759" width="3" height="4" fill="#000" opacity="0.35"/>
<rect x="1187.2" y="759" width="3" height="4" fill="#000" opacity="0.35"/>
<rect x="1196.0" y="759" width="3" height="4" fill="#000" opacity="0.35"/>
<rect x="1204.9" y="758" width="3" height="5" fill="#000" opacity="0.55"/>
<rect x="1213.7" y="759" width="3" height="4" fill="#000" opacity="0.35"/>
<rect x="1222.6" y="759" width="3" height="4" fill="#000" opacity="0.35"/>
<rect x="1231.4" y="759" width="3" height="4" fill="#000" opacity="0.35"/>
<rect x="1240.2" y="759" width="3" height="4" fill="#000" opacity="0.35"/>
<rect x="1249.1" y="757" width="3" height="6" fill="#000"/>
<rect x="1257.9" y="759" width="3" height="4" fill="#000" opacity="0.35"/>
<rect x="1266.7" y="759" width="3" height="4" fill="#000" opacity="0.35"/>
<rect x="1275.6" y="759" width="3" height="4" fill="#000" opacity="0.35"/>
<rect x="1284.4" y="759" width="3" height="4" fill="#000" opacity="0.35"/>
<rect x="1313" y="752.1" width="4" height="3" fill="#0000ff" opacity="0.38"/>
<rect x="1313" y="743.6" width="4" height="3" fill="#0000ff" opacity="0.38"/>
<rect x="1311" y="735.1" width="6" height="3" fill="#0000ff"/>
<rect x="1313" y="726.6" width="4" height="3" fill="#0000ff" opacity="0.38"/>
<rect x="1313" y="718.1" width="4" height="3" fill="#0000ff" opacity="0.38"/>
<rect x="1313" y="709.7" width="4" height="3" fill="#0000ff" opacity="0.38"/>
<rect x="1313" y="701.2" width="4" height="3" fill="#0000ff" opacity="0.38"/>
<rect x="1312" y="692.7" width="5" height="3" fill="#0000ff" opacity="0.55"/>
<rect x="1313" y="684.2" width="4" height="3" fill="#0000ff" opacity="0.38"/>
<rect x="1313" y="675.8" width="4" height="3" fill="#0000ff" opacity="0.38"/>
<rect x="1313" y="667.3" width="4" height="3" fill="#0000ff" opacity="0.38"/>
<rect x="1313" y="658.8" width="4" height="3" fill="#0000ff" opacity="0.38"/>
<rect x="1311" y="650.3" width="6" height="3" fill="#0000ff"/>
<rect x="1313" y="641.9" width="4" height="3" fill="#0000ff" opacity="0.38"/>
<rect x="1313" y="633.4" width="4" height="3" fill="#0000ff" opacity="0.38"/>
<rect x="1313" y="624.9" width="4" height="3" fill="#0000ff" opacity="0.38"/>
<rect x="1313" y="616.4" width="4" height="3" fill="#0000ff" opacity="0.38"/>
<rect x="1312" y="608.0" width="5" height="3" fill="#0000ff" opacity="0.55"/>
<rect x="1313" y="599.5" width="4" height="3" fill="#0000ff" opacity="0.38"/>
<rect x="1313" y="591.0" width="4" height="3" fill="#0000ff" opacity="0.38"/>
<rect x="1313" y="582.5" width="4" height="3" fill="#0000ff" opacity="0.38"/>
<rect x="1313" y="574.1" width="4" height="3" fill="#0000ff" opacity="0.38"/>
<rect x="1311" y="565.6" width="6" height="3" fill="#0000ff"/>
<rect x="1313" y="557.1" width="4" height="3" fill="#0000ff" opacity="0.38"/>
<rect x="1313" y="548.6" width="4" height="3" fill="#0000ff" opacity="0.38"/>
<rect x="1313" y="540.2" width="4" height="3" fill="#0000ff" opacity="0.38"/>
<rect x="1313" y="531.7" width="4" height="3" fill="#0000ff" opacity="0.38"/>
<rect x="1312" y="523.2" width="5" height="3" fill="#0000ff" opacity="0.55"/>
<rect x="1313" y="514.7" width="4" height="3" fill="#0000ff" opacity="0.38"/>
<rect x="1313" y="506.2" width="4" height="3" fill="#0000ff" opacity="0.38"/>
<rect x="1313" y="497.8" width="4" height="3" fill="#0000ff" opacity="0.38"/>
<rect x="1313" y="489.3" width="4" height="3" fill="#0000ff" opacity="0.38"/>
<rect x="1311" y="480.8" width="6" height="3" fill="#0000ff"/>
<rect x="1313" y="472.3" width="4" height="3" fill="#0000ff" opacity="0.38"/>
<rect x="1313" y="463.9" width="4" height="3" fill="#0000ff" opacity="0.38"/>
<rect x="1313" y="455.4" width="4" height="3" fill="#0000ff" opacity="0.38"/>
<rect x="1313" y="446.9" width="4" height="3" fill="#0000ff" opacity="0.38"/>
<rect x="1312" y="438.4" width="5" height="3" fill="#0000ff" opacity="0.55"/>
<rect x="1313" y="430.0" width="4" height="3" fill="#0000ff" opacity="0.38"/>
<rect x="1313" y="421.5" width="4" height="3" fill="#0000ff" opacity="0.38"/>
<rect x="1313" y="413.0" width="4" height="3" fill="#0000ff" opacity="0.38"/>
<rect x="1313" y="404.5" width="4" height="3" fill="#0000ff" opacity="0.38"/>
<rect x="1311" y="396.1" width="6" height="3" fill="#0000ff"/>
<rect x="1313" y="387.6" width="4" height="3" fill="#0000ff" opacity="0.38"/>
<rect x="1313" y="379.1" width="4" height="3" fill="#0000ff" opacity="0.38"/>
<rect x="1313" y="370.6" width="4" height="3" fill="#0000ff" opacity="0.38"/>
<rect x="1313" y="362.2" width="4" height="3" fill="#0000ff" opacity="0.38"/>
<rect x="1312" y="353.7" width="5" height="3" fill="#0000ff" opacity="0.55"/>
<rect x="1313" y="345.2" width="4" height="3" fill="#0000ff" opacity="0.38"/>
<rect x="1313" y="336.7" width="4" height="3" fill="#0000ff" opacity="0.38"/>
<rect x="1313" y="328.3" width="4" height="3" fill="#0000ff" opacity="0.38"/>
<rect x="1313" y="319.8" width="4" height="3" fill="#0000ff" opacity="0.38"/>
<rect x="1311" y="311.3" width="6" height="3" fill="#0000ff"/>
<rect x="1313" y="302.8" width="4" height="3" fill="#0000ff" opacity="0.38"/>
<rect x="1313" y="294.3" width="4" height="3" fill="#0000ff" opacity="0.38"/>
<rect x="1313" y="285.9" width="4" height="3" fill="#0000ff" opacity="0.38"/>
<rect x="1313" y="277.4" width="4" height="3" fill="#0000ff" opacity="0.38"/>
<rect x="1312" y="268.9" width="5" height="3" fill="#0000ff" opacity="0.55"/>
<rect x="1313" y="260.4" width="4" height="3" fill="#0000ff" opacity="0.38"/>
<rect x="1313" y="252.0" width="4" height="3" fill="#0000ff" opacity="0.38"/>
<rect x="1313" y="243.5" width="4" height="3" fill="#0000ff" opacity="0.38"/>
<rect x="1313" y="235.0" width="4" height="3" fill="#0000ff" opacity="0.38"/>
<rect x="1311" y="226.5" width="6" height="3" fill="#0000ff"/>
<rect x="1313" y="218.1" width="4" height="3" fill="#0000ff" opacity="0.38"/>
<rect x="1313" y="209.6" width="4" height="3" fill="#0000ff" opacity="0.38"/>
<rect x="1313" y="201.1" width="4" height="3" fill="#0000ff" opacity="0.38"/>
<rect x="1313" y="192.6" width="4" height="3" fill="#0000ff" opacity="0.38"/>
<rect x="1312" y="184.2" width="5" height="3" fill="#0000ff" opacity="0.55"/>
<rect x="1313" y="175.7" width="4" height="3" fill="#0000ff" opacity="0.38"/>
<rect x="1313" y="167.2" width="4" height="3" fill="#0000ff" opacity="0.38"/>
<rect x="1313" y="158.7" width="4" height="3" fill="#0000ff" opacity="0.38"/>
<rect x="1313" y="150.3" width="4" height="3" fill="#0000ff" opacity="0.38"/>
<rect x="1311" y="141.8" width="6" height="3" fill="#0000ff"/>
<rect x="1313" y="133.3" width="4" height="3" fill="#0000ff" opacity="0.38"/>
<rect x="1313" y="124.8" width="4" height="3" fill="#0000ff" opacity="0.38"/>
<rect x="675" y="763" width="645" height="3" fill="#000"/>
<rect x="675" y="122" width="3" height="644" fill="#0b5a32"/>
<rect x="1317" y="122" width="3" height="644" fill="#0000ff"/>
<text x="671.0" y="742.0" font-size="13.2" fill="#111" text-anchor="end" >0</text>
<text x="671.0" y="614.6" font-size="13.2" fill="#111" text-anchor="end" >0.5</text>
<text x="671.0" y="487.2" font-size="13.2" fill="#111" text-anchor="end" >1.0</text>
<text x="671.0" y="359.8" font-size="13.2" fill="#111" text-anchor="end" >1.5</text>
<text x="671.0" y="232.4" font-size="13.2" fill="#111" text-anchor="end" >2.0</text>
<text x="1322.2" y="741.6" font-size="13.2" fill="#111" text-anchor="start" >0</text>
<text x="1322.2" y="656.8" font-size="13.2" fill="#111" text-anchor="start" >2</text>
<text x="1322.2" y="572.1" font-size="13.2" fill="#111" text-anchor="start" >4</text>
<text x="1322.2" y="487.3" font-size="13.2" fill="#111" text-anchor="start" >6</text>
<text x="1322.2" y="402.6" font-size="13.2" fill="#111" text-anchor="start" >8</text>
<text x="1322.2" y="317.8" font-size="13.2" fill="#111" text-anchor="start" >10</text>
<text x="1322.2" y="233.0" font-size="13.2" fill="#111" text-anchor="start" >12</text>
<text x="1322.2" y="148.3" font-size="13.2" fill="#111" text-anchor="start" >14</text>
<text x="720.4" y="779.9" font-size="13.5" fill="#111" text-anchor="middle" >580</text>
<text x="808.8" y="779.9" font-size="13.5" fill="#111" text-anchor="middle" >582</text>
<text x="897.1" y="779.9" font-size="13.5" fill="#111" text-anchor="middle" >584</text>
<text x="985.5" y="779.9" font-size="13.5" fill="#111" text-anchor="middle" >586</text>
<text x="1073.8" y="779.9" font-size="13.5" fill="#111" text-anchor="middle" >588</text>
<text x="1162.2" y="779.9" font-size="13.5" fill="#111" text-anchor="middle" >590</text>
<text x="1250.6" y="779.9" font-size="13.5" fill="#111" text-anchor="middle" >592</text>
<text x="996.4" y="804.0" font-size="16.4" fill="#111" text-anchor="middle" >Time [s] (x1e-06)</text>
<text x="0" y="0" font-size="16.5" fill="#0b5a32" text-anchor="middle" transform="translate(646.7 443.8) rotate(-90)">Primary Source</text>
<text x="0" y="0" font-size="17" fill="#0000ff" text-anchor="middle" transform="translate(1358.3 447.7) rotate(-90)">Secondary Source</text>
<polyline points="705.0,737.0 719.0,737.0 734.8,737.0 748.9,737.0 762.9,737.0 777.0,737.0 791.0,737.0 804.8,737.0 818.9,737.0 838.0,737.0" stroke="#0000ff" stroke-width="5" fill="none" stroke-dasharray="24 6" stroke-dashoffset="4.3" stroke-linecap="butt" stroke-linejoin="round"/>
<polyline points="838.0,737.0 838.0,147.0" stroke="#0000ff" stroke-width="5" fill="none" stroke-dasharray="24 6" stroke-dashoffset="7.2" stroke-linecap="butt" stroke-linejoin="round"/>
<polyline points="838.0,147.0 848.9,192.8 862.8,249.1 873.5,293.5 888.1,351.7 898.9,394.5 913.0,452.5 922.6,496.5 936.3,554.5 945.9,591.0 958.2,641.5 968.8,685.5 980.7,737.0" stroke="#0000ff" stroke-width="5" fill="none" stroke-dasharray="24 6" stroke-dashoffset="0.8" stroke-linecap="butt" stroke-linejoin="round"/>
<polyline points="980.7,737.0 1006.1,737.0 1014.8,737.0 1044.1,737.0 1057.7,737.0 1072.0,737.0 1085.7,737.0 1100.0,737.0 1113.7,737.0 1132.7,737.0" stroke="#0000ff" stroke-width="5" fill="none" stroke-dasharray="24 6" stroke-dashoffset="5" stroke-linecap="butt" stroke-linejoin="round"/>
<polyline points="1132.7,737.0 1132.7,147.0" stroke="#0000ff" stroke-width="5" fill="none" stroke-dasharray="24 6" stroke-dashoffset="7.5" stroke-linecap="butt" stroke-linejoin="round"/>
<polyline points="1132.7,147.0 1144.0,192.7 1154.7,235.7 1168.8,294.3 1178.7,337.2 1193.9,395.0 1203.8,439.5 1217.5,497.0 1228.9,540.0 1240.3,591.0 1253.7,641.5 1263.9,686.0 1276.3,737.0" stroke="#0000ff" stroke-width="5" fill="none" stroke-dasharray="24 6" stroke-dashoffset="23" stroke-linecap="butt" stroke-linejoin="round"/>
<polyline points="1276.3,737.0 1290.9,737.0" stroke="#0000ff" stroke-width="5" fill="none" stroke-dasharray="24 6" stroke-dashoffset="3" stroke-linecap="butt" stroke-linejoin="round"/>
<polyline points="703.5,737.0 705.5,737.0 719.0,737.0" stroke="#0f5a35" stroke-width="5" fill="none" stroke-dasharray="24 6" stroke-dashoffset="3" stroke-linecap="butt" stroke-linejoin="round"/>
<polyline points="719.0,737.0 733.5,664.3 748.7,594.0 762.7,523.6 776.8,452.5 790.4,382.0 804.5,311.7 818.6,241.5 837.8,149.3 836.8,152.8" stroke="#0f5a35" stroke-width="5" fill="none" stroke-dasharray="24 6" stroke-dashoffset="15.3" stroke-linecap="butt" stroke-linejoin="round"/>
<polyline points="836.8,152.8 838.3,344.8 838.3,540.8 838.3,737.0" stroke="#0f5a35" stroke-width="5" fill="none" stroke-dasharray="24 6" stroke-dashoffset="17.6" stroke-linecap="butt" stroke-linejoin="round"/>
<polyline points="838.3,737.0 848.9,737.0 863.0,737.0 873.8,737.0 887.8,737.0 897.8,737.0 913.1,737.0 922.7,737.0 936.7,737.0 945.9,737.0 958.1,737.0 968.7,737.0 980.7,737.0 1006.1,737.0 1014.8,735.1" stroke="#0f5a35" stroke-width="5" fill="none" stroke-dasharray="24 6" stroke-dashoffset="3" stroke-linecap="butt" stroke-linejoin="round"/>
<polyline points="1014.8,735.1 1043.0,594.0 1057.8,523.7 1071.5,452.5 1086.3,382.9 1099.6,311.7 1113.3,241.4 1132.7,149.8" stroke="#0f5a35" stroke-width="5" fill="none" stroke-dasharray="24 6" stroke-dashoffset="28.3" stroke-linecap="butt" stroke-linejoin="round"/>
<polyline points="1132.7,149.8 1132.7,173.7 1132.7,296.2 1132.7,442.5 1132.7,590.2 1132.9,737.0" stroke="#0f5a35" stroke-width="5" fill="none" stroke-dasharray="24 6" stroke-dashoffset="-2.5" stroke-linecap="butt" stroke-linejoin="round"/>
<polyline points="1132.9,737.0 1143.7,737.0 1154.0,737.0 1167.8,737.0 1179.0,737.0 1192.8,737.0 1204.0,737.0 1217.8,737.0 1227.7,737.0 1240.9,737.0 1252.7,737.0 1263.9,737.0 1275.8,737.0 1290.9,737.0" stroke="#0f5a35" stroke-width="5" fill="none" stroke-dasharray="24 6" stroke-dashoffset="11" stroke-linecap="butt" stroke-linejoin="round"/>
<circle cx="734.8" cy="737" r="4.6" fill="#0000ff" stroke="#000" stroke-width="1"/>
<circle cx="748.9" cy="737" r="4.6" fill="#0000ff" stroke="#000" stroke-width="1"/>
<circle cx="762.9" cy="737" r="4.6" fill="#0000ff" stroke="#000" stroke-width="1"/>
<circle cx="777" cy="737" r="4.6" fill="#0000ff" stroke="#000" stroke-width="1"/>
<circle cx="791" cy="737" r="4.6" fill="#0000ff" stroke="#000" stroke-width="1"/>
<circle cx="804.8" cy="737" r="4.6" fill="#0000ff" stroke="#000" stroke-width="1"/>
<circle cx="818.9" cy="737" r="4.6" fill="#0000ff" stroke="#000" stroke-width="1"/>
<circle cx="848.9" cy="192.8" r="4.6" fill="#0000ff" stroke="#000" stroke-width="1"/>
<circle cx="862.8" cy="249.1" r="4.6" fill="#0000ff" stroke="#000" stroke-width="1"/>
<circle cx="873.5" cy="293.5" r="4.6" fill="#0000ff" stroke="#000" stroke-width="1"/>
<circle cx="888.1" cy="351.7" r="4.6" fill="#0000ff" stroke="#000" stroke-width="1"/>
<circle cx="898.9" cy="394.5" r="4.6" fill="#0000ff" stroke="#000" stroke-width="1"/>
<circle cx="913" cy="452.5" r="4.6" fill="#0000ff" stroke="#000" stroke-width="1"/>
<circle cx="922.6" cy="496.5" r="4.6" fill="#0000ff" stroke="#000" stroke-width="1"/>
<circle cx="936.3" cy="554.5" r="4.6" fill="#0000ff" stroke="#000" stroke-width="1"/>
<circle cx="945.9" cy="591" r="4.6" fill="#0000ff" stroke="#000" stroke-width="1"/>
<circle cx="958.2" cy="641.5" r="4.6" fill="#0000ff" stroke="#000" stroke-width="1"/>
<circle cx="968.8" cy="685.5" r="4.6" fill="#0000ff" stroke="#000" stroke-width="1"/>
<circle cx="1014.8" cy="737" r="4.6" fill="#0000ff" stroke="#000" stroke-width="1"/>
<circle cx="1044.1" cy="737" r="4.6" fill="#0000ff" stroke="#000" stroke-width="1"/>
<circle cx="1057.7" cy="737" r="4.6" fill="#0000ff" stroke="#000" stroke-width="1"/>
<circle cx="1072" cy="737" r="4.6" fill="#0000ff" stroke="#000" stroke-width="1"/>
<circle cx="1085.7" cy="737" r="4.6" fill="#0000ff" stroke="#000" stroke-width="1"/>
<circle cx="1100" cy="737" r="4.6" fill="#0000ff" stroke="#000" stroke-width="1"/>
<circle cx="1113.7" cy="737" r="4.6" fill="#0000ff" stroke="#000" stroke-width="1"/>
<circle cx="1144" cy="192.7" r="4.6" fill="#0000ff" stroke="#000" stroke-width="1"/>
<circle cx="1154.7" cy="235.7" r="4.6" fill="#0000ff" stroke="#000" stroke-width="1"/>
<circle cx="1168.8" cy="294.3" r="4.6" fill="#0000ff" stroke="#000" stroke-width="1"/>
<circle cx="1178.7" cy="337.2" r="4.6" fill="#0000ff" stroke="#000" stroke-width="1"/>
<circle cx="1193.9" cy="395" r="4.6" fill="#0000ff" stroke="#000" stroke-width="1"/>
<circle cx="1203.8" cy="439.5" r="4.6" fill="#0000ff" stroke="#000" stroke-width="1"/>
<circle cx="1217.5" cy="497" r="4.6" fill="#0000ff" stroke="#000" stroke-width="1"/>
<circle cx="1228.9" cy="540" r="4.6" fill="#0000ff" stroke="#000" stroke-width="1"/>
<circle cx="1240.3" cy="591" r="4.6" fill="#0000ff" stroke="#000" stroke-width="1"/>
<circle cx="1253.7" cy="641.5" r="4.6" fill="#0000ff" stroke="#000" stroke-width="1"/>
<circle cx="1263.9" cy="686" r="4.6" fill="#0000ff" stroke="#000" stroke-width="1"/>
<circle cx="836.8" cy="152.8" r="4.6" fill="#0f5a35" stroke="#000" stroke-width="1"/>
<circle cx="703.5" cy="737" r="4.6" fill="#0f5a35" stroke="#000" stroke-width="1"/>
<circle cx="705.5" cy="737" r="4.6" fill="#0f5a35" stroke="#000" stroke-width="1"/>
<circle cx="719" cy="737" r="4.6" fill="#0f5a35" stroke="#000" stroke-width="1"/>
<circle cx="733.5" cy="664.3" r="4.6" fill="#0f5a35" stroke="#000" stroke-width="1"/>
<circle cx="748.7" cy="594" r="4.6" fill="#0f5a35" stroke="#000" stroke-width="1"/>
<circle cx="762.7" cy="523.6" r="4.6" fill="#0f5a35" stroke="#000" stroke-width="1"/>
<circle cx="776.8" cy="452.5" r="4.6" fill="#0f5a35" stroke="#000" stroke-width="1"/>
<circle cx="790.4" cy="382" r="4.6" fill="#0f5a35" stroke="#000" stroke-width="1"/>
<circle cx="804.5" cy="311.7" r="4.6" fill="#0f5a35" stroke="#000" stroke-width="1"/>
<circle cx="818.6" cy="241.5" r="4.6" fill="#0f5a35" stroke="#000" stroke-width="1"/>
<circle cx="837.8" cy="149.3" r="4.6" fill="#0f5a35" stroke="#000" stroke-width="1"/>
<circle cx="837.8" cy="344.8" r="4.6" fill="#0f5a35" stroke="#000" stroke-width="1"/>
<circle cx="837.6" cy="540.8" r="4.6" fill="#0f5a35" stroke="#000" stroke-width="1"/>
<circle cx="837.6" cy="737" r="4.6" fill="#0f5a35" stroke="#000" stroke-width="1"/>
<circle cx="848.9" cy="737" r="4.6" fill="#0f5a35" stroke="#000" stroke-width="1"/>
<circle cx="863" cy="737" r="4.6" fill="#0f5a35" stroke="#000" stroke-width="1"/>
<circle cx="873.8" cy="737" r="4.6" fill="#0f5a35" stroke="#000" stroke-width="1"/>
<circle cx="887.8" cy="737" r="4.6" fill="#0f5a35" stroke="#000" stroke-width="1"/>
<circle cx="897.8" cy="737" r="4.6" fill="#0f5a35" stroke="#000" stroke-width="1"/>
<circle cx="913.1" cy="737" r="4.6" fill="#0f5a35" stroke="#000" stroke-width="1"/>
<circle cx="922.7" cy="737" r="4.6" fill="#0f5a35" stroke="#000" stroke-width="1"/>
<circle cx="936.7" cy="737" r="4.6" fill="#0f5a35" stroke="#000" stroke-width="1"/>
<circle cx="945.9" cy="737" r="4.6" fill="#0f5a35" stroke="#000" stroke-width="1"/>
<circle cx="958.1" cy="737" r="4.6" fill="#0f5a35" stroke="#000" stroke-width="1"/>
<circle cx="968.7" cy="737" r="4.6" fill="#0f5a35" stroke="#000" stroke-width="1"/>
<circle cx="980.7" cy="737" r="4.6" fill="#0f5a35" stroke="#000" stroke-width="1"/>
<circle cx="1006.1" cy="737" r="4.6" fill="#0f5a35" stroke="#000" stroke-width="1"/>
<circle cx="1043" cy="594" r="4.6" fill="#0f5a35" stroke="#000" stroke-width="1"/>
<circle cx="1057.8" cy="523.7" r="4.6" fill="#0f5a35" stroke="#000" stroke-width="1"/>
<circle cx="1071.5" cy="452.5" r="4.6" fill="#0f5a35" stroke="#000" stroke-width="1"/>
<circle cx="1086.3" cy="382.9" r="4.6" fill="#0f5a35" stroke="#000" stroke-width="1"/>
<circle cx="1099.6" cy="311.7" r="4.6" fill="#0f5a35" stroke="#000" stroke-width="1"/>
<circle cx="1113.3" cy="241.4" r="4.6" fill="#0f5a35" stroke="#000" stroke-width="1"/>
<circle cx="1132.7" cy="149.8" r="4.6" fill="#0f5a35" stroke="#000" stroke-width="1"/>
<circle cx="1132.7" cy="173.7" r="4.6" fill="#0f5a35" stroke="#000" stroke-width="1"/>
<circle cx="1132.7" cy="296.2" r="4.6" fill="#0f5a35" stroke="#000" stroke-width="1"/>
<circle cx="1132.7" cy="442.5" r="4.6" fill="#0f5a35" stroke="#000" stroke-width="1"/>
<circle cx="1132.7" cy="590.2" r="4.6" fill="#0f5a35" stroke="#000" stroke-width="1"/>
<circle cx="1132.9" cy="737" r="4.6" fill="#0f5a35" stroke="#000" stroke-width="1"/>
<circle cx="1143.7" cy="737" r="4.6" fill="#0f5a35" stroke="#000" stroke-width="1"/>
<circle cx="1154" cy="737" r="4.6" fill="#0f5a35" stroke="#000" stroke-width="1"/>
<circle cx="1167.8" cy="737" r="4.6" fill="#0f5a35" stroke="#000" stroke-width="1"/>
<circle cx="1179" cy="737" r="4.6" fill="#0f5a35" stroke="#000" stroke-width="1"/>
<circle cx="1192.8" cy="737" r="4.6" fill="#0f5a35" stroke="#000" stroke-width="1"/>
<circle cx="1204" cy="737" r="4.6" fill="#0f5a35" stroke="#000" stroke-width="1"/>
<circle cx="1217.8" cy="737" r="4.6" fill="#0f5a35" stroke="#000" stroke-width="1"/>
<circle cx="1227.7" cy="737" r="4.6" fill="#0f5a35" stroke="#000" stroke-width="1"/>
<circle cx="1240.9" cy="737" r="4.6" fill="#0f5a35" stroke="#000" stroke-width="1"/>
<circle cx="1252.7" cy="737" r="4.6" fill="#0f5a35" stroke="#000" stroke-width="1"/>
<circle cx="1263.9" cy="737" r="4.6" fill="#0f5a35" stroke="#000" stroke-width="1"/>
<circle cx="1275.8" cy="737" r="4.6" fill="#0f5a35" stroke="#000" stroke-width="1"/>
<circle cx="1290.9" cy="737" r="4.6" fill="#0f5a35" stroke="#000" stroke-width="1"/>
<circle cx="1014.8" cy="735.1" r="4.6" fill="#0f5a35" stroke="#000" stroke-width="1"/>
</svg></div></div></body></html>
